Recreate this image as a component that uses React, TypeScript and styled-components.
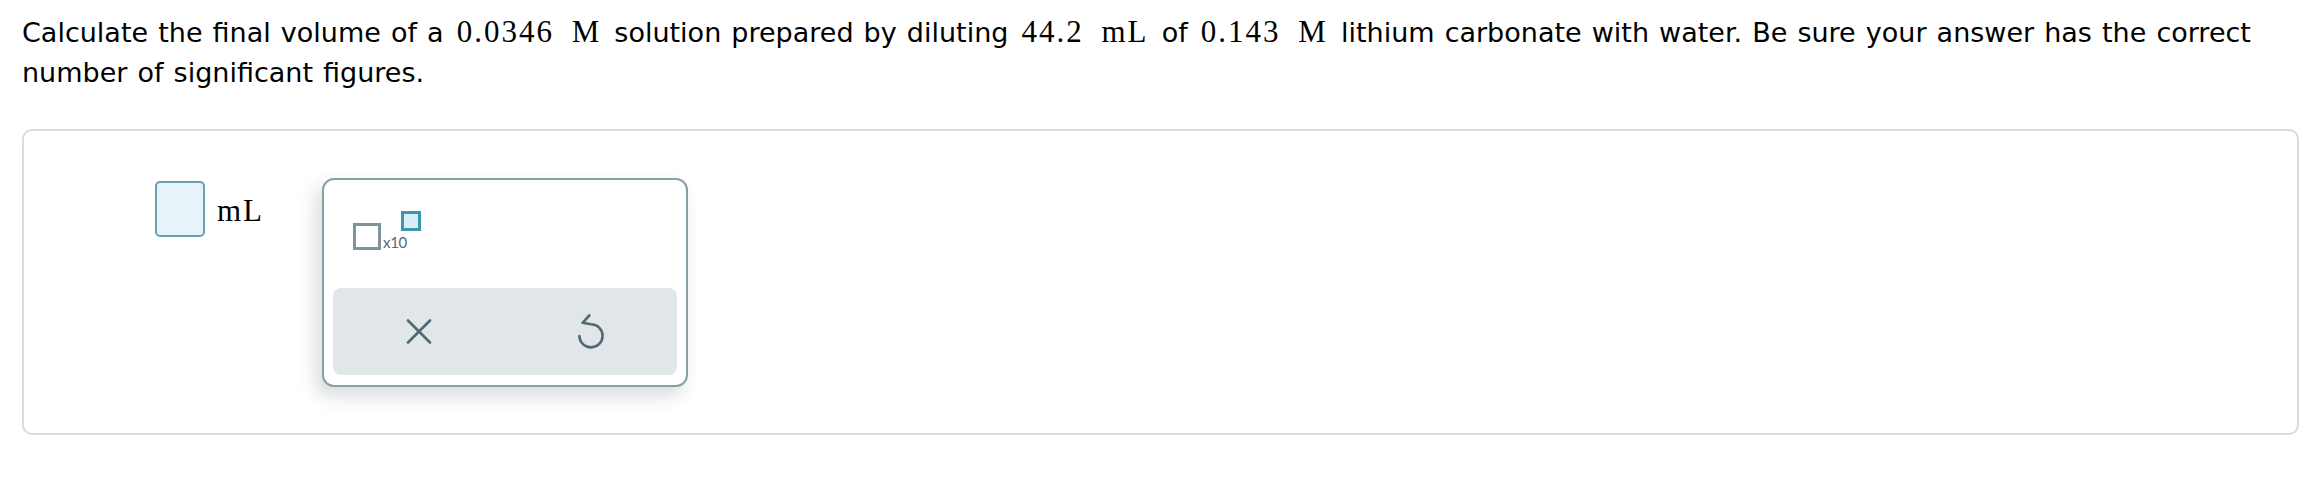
import React from "react";
import styled, { createGlobalStyle } from "styled-components";

const GlobalStyle = createGlobalStyle`
  html, body {
    margin: 0;
    padding: 0;
    background: #ffffff;
  }
  * {
    box-sizing: border-box;
  }
`;

const Page = styled.main`
  padding: 12px 6px 0 22px;
`;

const Question = styled.p`
  margin: 0;
  font-family: "DejaVu Sans", Verdana, sans-serif;
  font-size: 27px;
  line-height: 40px;
  word-spacing: 1.5px;
  color: #000000;
`;

const MathText = styled.span`
  margin: 0 3px;
  font-family: "Liberation Serif", "Times New Roman", serif;
  font-size: 31px;
  line-height: 40px;
  letter-spacing: 2px;
  word-spacing: 8px;
`;

const AnswerCard = styled.section`
  margin-top: 36px;
  height: 306px;
  border: 2px solid #d5dde0;
  border-radius: 10px;
  display: flex;
  align-items: flex-start;
  padding: 50px 0 0 131px;
`;

const AnswerGroup = styled.div`
  display: flex;
  align-items: flex-start;
`;

const AnswerInput = styled.div`
  width: 50px;
  height: 56px;
  border: 2px solid #6aa2b1;
  border-radius: 5px;
  background: #e7f3f8;
`;

const UnitLabel = styled.span`
  width: 49px;
  margin-left: 12px;
  padding-top: 2px;
  font-family: "Liberation Serif", "Times New Roman", serif;
  font-size: 31px;
  line-height: 56px;
  letter-spacing: 2px;
  color: #000000;
`;

const Keypad = styled.div`
  margin: -3px 0 0 56px;
  width: 366px;
  height: 209px;
  border: 2px solid #8a9ea6;
  border-radius: 12px;
  background: #ffffff;
  box-shadow: -6px 9px 18px rgba(40, 55, 62, 0.18);
  display: flex;
  flex-direction: column;
  justify-content: space-between;
  padding: 31px 9px 10px 9px;
`;

const SciRow = styled.div`
  display: flex;
  align-items: flex-end;
  height: 39px;
  padding-left: 20px;
`;

const SlotBox = styled.span<{ $active?: boolean }>`
  display: block;
  width: ${(p) => (p.$active ? "20px" : "28px")};
  height: ${(p) => (p.$active ? "20px" : "27px")};
  border: 3px solid ${(p) => (p.$active ? "#3b96ae" : "#7e939c")};
  background: ${(p) => (p.$active ? "#d6eef4" : "#ffffff")};
  align-self: ${(p) => (p.$active ? "flex-start" : "flex-end")};
`;

const TimesTen = styled.span`
  margin: 0 -6px 0 2px;
  font-family: Lato, "Open Sans", sans-serif;
  font-size: 15px;
  line-height: 15px;
  color: #4e6b76;
  letter-spacing: -0.3px;
`;

const ActionBar = styled.div`
  height: 87px;
  border-radius: 8px;
  background: #e1e6e8;
  display: flex;
`;

const ActionButton = styled.button`
  flex: 1;
  border: none;
  background: transparent;
  padding: 0;
  display: flex;
  align-items: center;
  justify-content: center;
  cursor: pointer;
`;

const ClearIcon = () => (
  <svg width="26" height="25" viewBox="0 0 26 25" fill="none">
    <path
      d="M2 1.5 L24 23.5 M24 1.5 L2 23.5"
      stroke="#4d6a75"
      strokeWidth="2.6"
      strokeLinecap="round"
    />
  </svg>
);

const UndoIcon = () => (
  <svg width="28" height="35" viewBox="0 0 28 35" fill="none">
    <path
      d="M12.3 1.5 L5.6 8.8 L14 10.2 A11.6 11.6 0 1 1 2.4 22"
      stroke="#4d6a75"
      strokeWidth="2.6"
      strokeLinecap="round"
      strokeLinejoin="round"
    />
  </svg>
);

export default function App() {
  return (
    <>
      <GlobalStyle />
      <Page>
        <Question>
          Calculate the final volume of a <MathText>0.0346 M</MathText> solution
          prepared by diluting <MathText>44.2 mL</MathText> of{" "}
          <MathText>0.143 M</MathText> lithium carbonate with water. Be sure your
          answer has the correct number of significant figures.
        </Question>
        <AnswerCard>
          <AnswerGroup>
            <AnswerInput />
            <UnitLabel>mL</UnitLabel>
          </AnswerGroup>
          <Keypad>
            <SciRow>
              <SlotBox />
              <TimesTen>x10</TimesTen>
              <SlotBox $active />
            </SciRow>
            <ActionBar>
              <ActionButton aria-label="Clear">
                <ClearIcon />
              </ActionButton>
              <ActionButton aria-label="Undo">
                <UndoIcon />
              </ActionButton>
            </ActionBar>
          </Keypad>
        </AnswerCard>
      </Page>
    </>
  );
}
